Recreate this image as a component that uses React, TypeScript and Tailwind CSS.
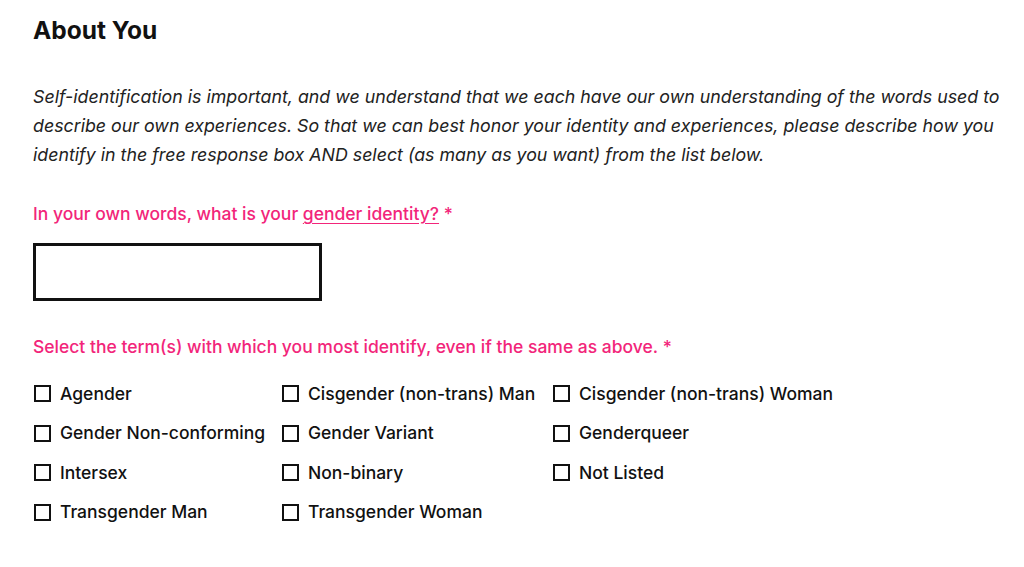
import React from 'react';

const TERMS = [
  'Agender',
  'Cisgender (non-trans) Man',
  'Cisgender (non-trans) Woman',
  'Gender Non-conforming',
  'Gender Variant',
  'Genderqueer',
  'Intersex',
  'Non-binary',
  'Not Listed',
  'Transgender Man',
  'Transgender Woman',
];

function Checkbox({ label }: { label: string }) {
  return (
    <label className="flex h-[39.5px] items-center gap-[9px]">
      <span className="block h-[17px] w-[17px] shrink-0 border-2 border-[#111]" />
      <span className="text-[17.5px] font-medium text-[#111]">{label}</span>
    </label>
  );
}

export default function App() {
  return (
    <div
      className="min-h-[567px] bg-white pl-[33px] pt-[14px] text-[#111]"
      style={{ fontFamily: 'Inter, "Noto Sans", sans-serif' }}
    >
      <h1 className="text-[24.5px] font-bold leading-[32px]">About You</h1>

      <p className="mt-[36px] max-w-[980px] text-[17.8px] italic leading-[29px] text-[#222]">
        Self-identification is important, and we understand that we each have our own
        understanding of the words used to describe our own experiences. So that we can best
        honor your identity and experiences, please describe how you identify in the free
        response box AND select (as many as you want) from the list below.
      </p>

      <p className="mt-[33px] text-[17.5px] font-medium leading-[24px] text-[#f2257a]">
        In your own words, what is your{' '}
        <span className="underline underline-offset-[3px]">gender identity?</span> *
      </p>

      <div className="mt-[17px] h-[58px] w-[289px] border-[3px] border-[#111] bg-white" />

      <p className="mt-[34px] text-[17.5px] font-medium leading-[24px] text-[#f2257a]">
        Select the term(s) with which you most identify, even if the same as above. *
      </p>

      <div className="mt-[15px] grid grid-cols-[248px_271px_auto] pl-px">
        {TERMS.map((t) => (
          <Checkbox key={t} label={t} />
        ))}
      </div>
    </div>
  );
}
